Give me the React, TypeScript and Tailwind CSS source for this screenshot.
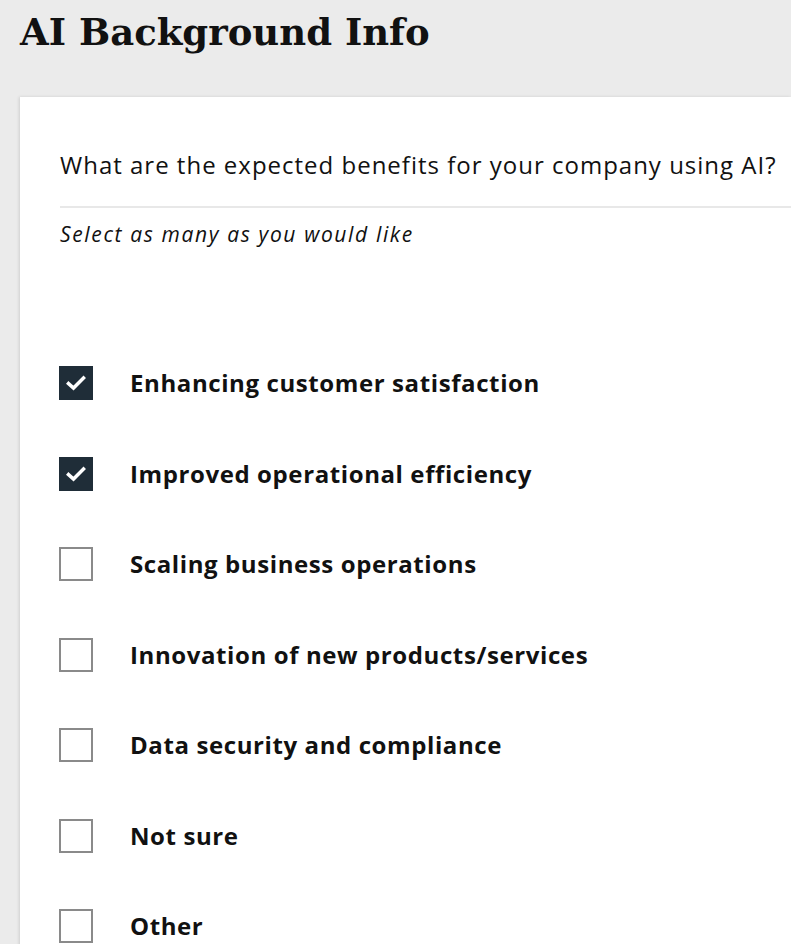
import React from "react";

const options = [
  { label: "Enhancing customer satisfaction", checked: true },
  { label: "Improved operational efficiency", checked: true },
  { label: "Scaling business operations", checked: false },
  { label: "Innovation of new products/services", checked: false },
  { label: "Data security and compliance", checked: false },
  { label: "Not sure", checked: false },
  { label: "Other", checked: false },
];

export default function App() {
  return (
    <div className="h-[944px] w-full overflow-hidden bg-[#ebebeb]">
      <h1
        className="pl-5 pt-[7px] text-[37px] font-bold leading-[50px] text-[#111]"
        style={{ fontFamily: '"DejaVu Serif", serif' }}
      >
        AI Background Info
      </h1>
      <div className="ml-5 mt-10 h-[900px] bg-white pl-10 pt-[50px] shadow-[-1px_0_3px_rgba(0,0,0,0.12)]">
        <div
          className="whitespace-nowrap text-[24px] leading-[36px] tracking-[1px] text-[#111]"
          style={{ fontFamily: '"Open Sans", sans-serif' }}
        >
          What are the expected benefits for your company using AI?
        </div>
        <div className="mt-[23px] h-[2px] bg-[#e8e8e8]" />
        <div
          className="mt-[13px] whitespace-nowrap text-[21px] italic leading-[26px] tracking-[1.65px] text-[#111]"
          style={{ fontFamily: '"Open Sans", sans-serif' }}
        >
          Select as many as you would like
        </div>
        <div className="mt-[119px] flex flex-col gap-[56.5px]">
          {options.map((o) => (
            <div key={o.label} className="flex h-[34px] items-center">
              {o.checked ? (
                <div className="flex h-[34px] w-[34px] -translate-x-px items-center justify-center bg-[#1f2d38]">
                  <svg width="20" height="16" viewBox="0 0 20 16" fill="none">
                    <path
                      d="M2.5 8.5 L7.5 13 L17.5 3"
                      stroke="white"
                      strokeWidth="3.5"
                      strokeLinecap="square"
                    />
                  </svg>
                </div>
              ) : (
                <div className="h-[34px] w-[34px] -translate-x-px border-2 border-[#8a8a8a] bg-white" />
              )}
              <span
                className="ml-[36px] whitespace-nowrap text-[24px] font-bold tracking-[0.6px] text-[#111]"
                style={{ fontFamily: '"Open Sans", sans-serif' }}
              >
                {o.label}
              </span>
            </div>
          ))}
        </div>
      </div>
    </div>
  );
}
